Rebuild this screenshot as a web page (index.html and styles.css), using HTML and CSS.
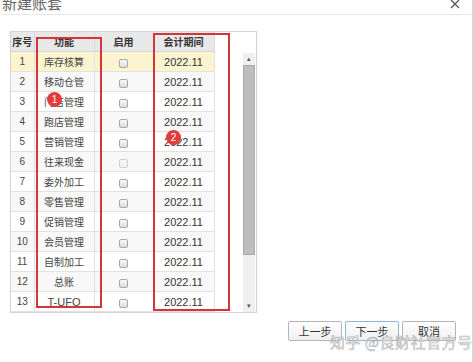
FILE: index.html
```html
<!DOCTYPE html>
<html lang="zh-CN">
<head>
    <meta charset="UTF-8">
    <title>新建账套</title>
    <link rel="stylesheet" href="styles.css">
</head>
<body>
    <div class="dialog">
        <div class="dialog-head">
            <span class="title">新建账套</span>
            <svg class="close" width="10" height="10" viewBox="0 0 10 10">
                <path d="M1 0 L9 8 M9 0 L1 8" stroke="#555" stroke-width="1.3" fill="none"/>
            </svg>
        </div>

        <div class="content">
            <div class="grid-wrap">
                <div class="grid">
                    <table>
                        <colgroup>
                            <col style="width: 23px">
                            <col style="width: 60px">
                            <col style="width: 59px">
                            <col style="width: 61px">
                        </colgroup>
                        <thead>
                            <tr><th>序号</th><th>功能</th><th>启用</th><th>会计期间</th></tr>
                        </thead>
                        <tbody>
                            <tr class="selected"><td>1</td><td>库存核算</td><td><span class="check"></span></td><td class="date">2022.11</td></tr>
                            <tr><td>2</td><td>移动仓管</td><td><span class="check"></span></td><td class="date">2022.11</td></tr>
                            <tr><td>3</td><td>门店管理</td><td><span class="check"></span></td><td class="date">2022.11</td></tr>
                            <tr><td>4</td><td>跑店管理</td><td><span class="check"></span></td><td class="date">2022.11</td></tr>
                            <tr><td>5</td><td>营销管理</td><td><span class="check"></span></td><td class="date">2022.11</td></tr>
                            <tr><td>6</td><td>往来现金</td><td><span class="check disabled"></span></td><td class="date">2022.11</td></tr>
                            <tr><td>7</td><td>委外加工</td><td><span class="check"></span></td><td class="date">2022.11</td></tr>
                            <tr><td>8</td><td>零售管理</td><td><span class="check"></span></td><td class="date">2022.11</td></tr>
                            <tr><td>9</td><td>促销管理</td><td><span class="check"></span></td><td class="date">2022.11</td></tr>
                            <tr><td>10</td><td>会员管理</td><td><span class="check"></span></td><td class="date">2022.11</td></tr>
                            <tr><td>11</td><td>自制加工</td><td><span class="check"></span></td><td class="date">2022.11</td></tr>
                            <tr><td>12</td><td>总账</td><td><span class="check"></span></td><td class="date">2022.11</td></tr>
                            <tr><td>13</td><td class="latin">T-UFO</td><td><span class="check"></span></td><td class="date">2022.11</td></tr>
                        </tbody>
                    </table>
                    <div class="filler">
                        <div class="scrollbar">
                            <div class="arrow">&#9652;</div>
                            <div class="thumb"></div>
                            <div class="track"></div>
                            <div class="arrow">&#9662;</div>
                        </div>
                    </div>
                </div>

                <div class="mark mark-func"></div>
                <div class="mark mark-period"></div>
                <span class="badge badge-1">1</span>
                <span class="badge badge-2">2</span>
            </div>

            <div class="actions">
                <button class="btn">上一步</button>
                <button class="btn btn-focus">下一步</button>
                <button class="btn">取消</button>
            </div>
        </div>

        <span class="watermark">知乎 @良财社官方号</span>
    </div>
</body>
</html>
```

FILE: styles.css
```css
body {
    margin: 0;
    background: #fff;
    font-family: "Liberation Sans", "Noto Sans CJK SC", sans-serif;
    color: #333;
    overflow: hidden;
}

.dialog {
    position: relative;
    width: 474px;
    height: 362px;
    box-sizing: border-box;
    border-right: 2px solid #d9d9d9;
    overflow: hidden;
}

.dialog-head {
    height: 14px;
    border-bottom: 1px solid #e8e8e8;
    display: flex;
    justify-content: space-between;
    align-items: flex-start;
    padding: 0 12px 0 2px;
}
.title {
    font-family: "Noto Sans CJK SC", sans-serif;
    font-size: 15px;
    line-height: 18px;
    margin-top: -6px;
    color: #666;
}

.content {
    padding: 16px 0 0 10px;
}

.grid-wrap {
    position: relative;
    width: 247px;
}
.grid {
    display: flex;
    border: 1px solid #d4d4d4;
    background: #fff;
}

table {
    border-collapse: collapse;
    table-layout: fixed;
    width: 203px;
    font-family: "Noto Sans CJK SC", sans-serif;
    font-size: 10px;
}
th {
    height: 19px;
    padding: 0;
    background: #e8e8e8;
    border-right: 1px solid #dadada;
    border-bottom: 1px solid #d4d4d4;
    font-weight: bold;
    color: #333;
}
td {
    height: 19px;
    padding: 0;
    text-align: center;
    border-right: 1px solid #e2e2e2;
    border-bottom: 1px solid #e2e2e2;
    color: #444;
}
td:first-child {
    font-family: "Liberation Sans", sans-serif;
}
tbody tr:nth-child(even) td {
    background: #f8f8f8;
}
tr.selected td {
    background: #fcf3cf;
}
.date {
    font-family: "Liberation Sans", sans-serif;
    font-size: 11px;
    color: #333;
}
.latin {
    font-family: "Liberation Sans", sans-serif;
    font-size: 11px;
}

.check {
    display: inline-block;
    width: 7px;
    height: 7px;
    border: 1px solid #a8a8a8;
    border-radius: 2px;
    background: linear-gradient(#fafafa, #dcdcdc);
    vertical-align: middle;
}
.check.disabled {
    border-color: #d0d0d0;
    background: #f2f2f2;
}

.filler {
    flex: 1;
    display: flex;
    justify-content: flex-end;
    padding-top: 21px;
    padding-right: 1px;
}
.scrollbar {
    width: 12px;
    display: flex;
    flex-direction: column;
    background: #efefef;
}
.arrow {
    height: 12px;
    font-size: 7px;
    line-height: 12px;
    text-align: center;
    color: #555;
}
.thumb {
    height: 190px;
    background: #bdbdbd;
    border: 1px solid #aaa;
    box-sizing: border-box;
}
.track {
    flex: 1;
}

.mark {
    position: absolute;
    border: 2px solid #d2353b;
    box-sizing: border-box;
}
.mark-func {
    left: 26px;
    top: 6px;
    width: 66px;
    height: 271px;
}
.mark-period {
    left: 143px;
    top: 2px;
    width: 77px;
    height: 278px;
}

.badge {
    position: absolute;
    width: 15px;
    height: 15px;
    border-radius: 50%;
    background: #e23c3c;
    color: #fff;
    font-size: 10px;
    line-height: 15px;
    text-align: center;
}
.badge-1 {
    left: 37px;
    top: 61px;
}
.badge-2 {
    left: 156px;
    top: 99px;
}

.actions {
    display: flex;
    justify-content: flex-end;
    gap: 3px;
    margin-top: 8px;
    padding-right: 16px;
}
.btn {
    width: 54px;
    height: 20px;
    padding: 0;
    border: 1px solid #b5b5b5;
    border-radius: 2px;
    background: linear-gradient(#ffffff, #f0f0f0);
    font-family: "Noto Sans CJK SC", sans-serif;
    font-size: 11px;
    color: #333;
}
.btn-focus {
    border-color: #8fb3d9;
}

.watermark {
    position: absolute;
    left: 330px;
    top: 331px;
    font-family: "Noto Sans CJK SC", sans-serif;
    font-size: 15px;
    letter-spacing: 0.5px;
    color: rgba(248, 248, 248, 0.8);
    -webkit-text-stroke: 0.6px rgba(140, 140, 140, 0.65);
    white-space: nowrap;
}
```
